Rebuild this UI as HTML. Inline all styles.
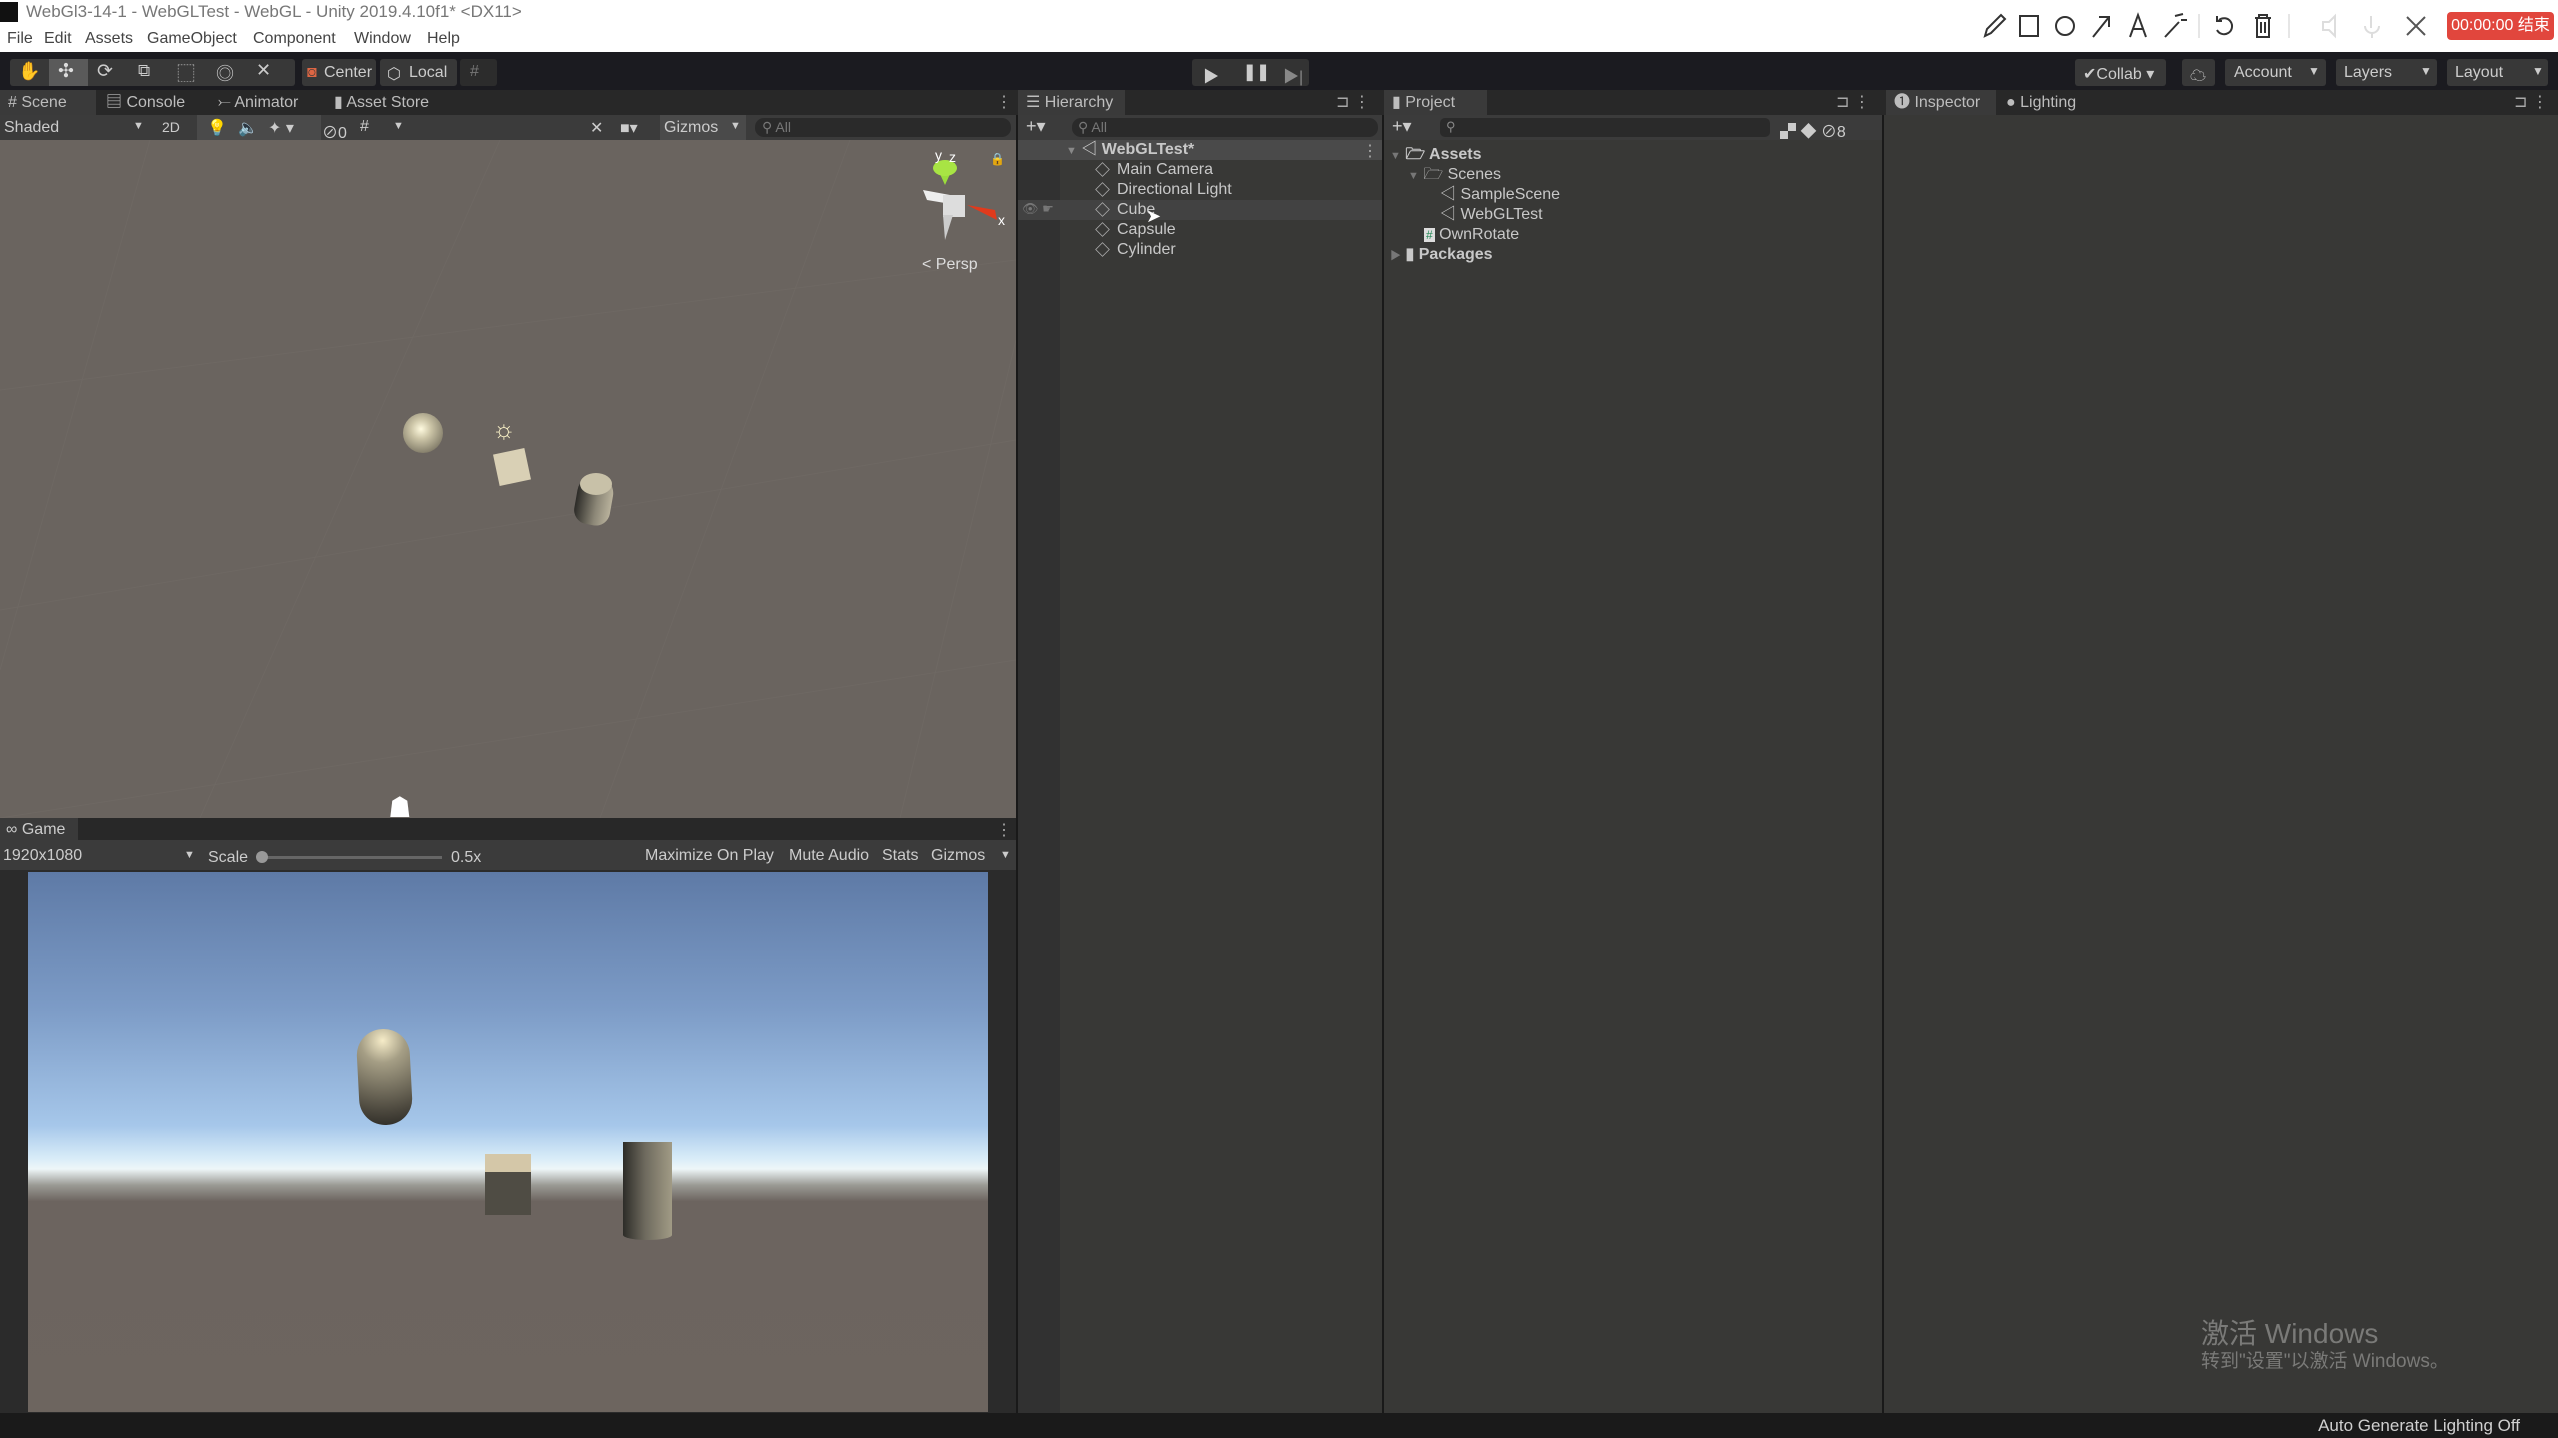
<!DOCTYPE html>
<html><head><meta charset="utf-8"><style>
*{margin:0;padding:0;box-sizing:border-box}
body{width:2558px;height:1438px;overflow:hidden;background:#191919;font-family:"Liberation Sans","Noto Sans CJK SC",sans-serif;font-size:16px;color:#c4c4c4;position:relative}
.a{position:absolute}
.t{position:absolute;white-space:nowrap}
.btn{position:absolute;background:#383838;border-radius:3px}
.tab{position:absolute;top:90px;height:25px;background:#282828;line-height:25px;padding-left:8px;color:#bdbdbd}
.row{position:absolute;height:20px;line-height:20px;white-space:nowrap;color:#c8c8c8}
.cube{display:inline-block;width:13px;height:13px;border:1.5px solid #aaa;transform:rotate(45deg) scale(.8);margin-right:8px;vertical-align:-2px}
</style></head><body>
<div class="a" style="left:0;top:0;width:2558px;height:52px;background:#fff"></div>
<div class="a" style="left:0;top:2px;width:18px;height:20px;background:#111"></div>
<div class="t" style="left:26px;top:2px;font-size:17px;color:#777">WebGl3-14-1 - WebGLTest - WebGL - Unity 2019.4.10f1* &lt;DX11&gt;</div>
<div class="t" style="left:7px;top:30px;font-size:16px;color:#444">File</div>
<div class="t" style="left:44px;top:30px;color:#444">Edit</div>
<div class="t" style="left:85px;top:30px;color:#444">Assets</div>
<div class="t" style="left:147px;top:30px;color:#444">GameObject</div>
<div class="t" style="left:253px;top:30px;color:#444">Component</div>
<div class="t" style="left:354px;top:30px;color:#444">Window</div>
<div class="t" style="left:427px;top:30px;color:#444">Help</div>
<svg class="a" style="left:1975px;top:10px" width="460" height="32" fill="none" stroke="#333" stroke-width="2">
<path d="M10 26 L12 19 L26 5 L30 9 L16 23 Z"/>
<rect x="45" y="6" width="18" height="20"/>
<circle cx="90" cy="16" r="9"/>
<path d="M118 27 L134 7 M124 7 H134 V17"/>
<path d="M155 27 L163 5 L171 27 M158 19 H168"/>
<path d="M190 27 L204 12 M200 6 L208 4 M206 10 L212 10"/>
<path d="M224 4 V28" stroke="#ccc" stroke-width="1"/>
<path d="M244 10 A8 8 0 1 1 242 20 M242 6 V11 H247"/>
<path d="M280 8 H296 M284 8 V5 H292 V8 M282 8 V27 H294 V8 M286 12 V23 M290 12 V23"/>
<path d="M314 4 V28" stroke="#ccc" stroke-width="1"/>
<path d="M348 12 H354 L360 6 V26 L354 20 H348 Z" stroke="#ddd"/>
<path d="M396 6 V18 M390 16 A7 7 0 0 0 404 16 M397 23 V28" stroke="#ddd"/>
<path d="M432 7 L450 25 M450 7 L432 25" stroke="#555"/>
</svg>
<div class="a" style="left:2447px;top:12px;width:107px;height:28px;background:#e1463d;border-radius:4px;color:#fff;font-size:16px;line-height:28px;text-align:center">00:00:00 结束</div>

<div class="a" style="left:0;top:52px;width:2558px;height:38px;background:#1b1b20"></div>
<div class="btn" style="left:10px;top:59px;width:285px;height:27px;background:#383838"></div>
<div class="btn" style="left:49px;top:59px;width:39px;height:27px;background:#5a5a5a;border-radius:0"></div>
<div class="t" style="left:18px;top:61px;font-size:18px;color:#ddd">✋</div>
<div class="t" style="left:58px;top:60px;font-size:19px;color:#ddd">✣</div>
<div class="t" style="left:97px;top:60px;font-size:19px;color:#ccc">⟳</div>
<div class="t" style="left:138px;top:61px;font-size:17px;color:#ccc">⧉</div>
<div class="t" style="left:177px;top:60px;font-size:18px;color:#ccc">⬚</div>
<div class="t" style="left:216px;top:60px;font-size:18px;color:#ccc">◎</div>
<div class="t" style="left:256px;top:60px;font-size:18px;color:#ccc">✕</div>
<div class="btn" style="left:302px;top:59px;width:74px;height:27px"></div>
<div class="t" style="left:307px;top:64px;color:#d64">◙</div><div class="t" style="left:324px;top:64px;color:#ccc">Center</div>
<div class="btn" style="left:380px;top:59px;width:77px;height:27px"></div>
<div class="t" style="left:387px;top:64px;color:#ccc">⬡</div><div class="t" style="left:409px;top:64px;color:#ccc">Local</div>
<div class="btn" style="left:460px;top:59px;width:37px;height:27px;background:#2c2c2c"></div>
<div class="t" style="left:470px;top:63px;color:#777">#</div>
<div class="btn" style="left:1192px;top:59px;width:117px;height:27px;background:#333"></div>
<div class="t" style="left:1203px;top:63px;color:#ccc">▶</div>
<div class="t" style="left:1243px;top:62px;color:#ccc;font-weight:bold">❚❚</div>
<div class="t" style="left:1283px;top:63px;color:#888">▶|</div>
<div class="btn" style="left:2075px;top:59px;width:91px;height:27px"></div><div class="t" style="left:2083px;top:64px;color:#ccc">✔Collab ▾</div>
<div class="btn" style="left:2182px;top:59px;width:33px;height:27px"></div><div class="t" style="left:2190px;top:62px;color:#ccc">☁</div>
<div class="btn" style="left:2225px;top:59px;width:101px;height:27px"></div><div class="t" style="left:2234px;top:64px;color:#ccc">Account</div><div class="t" style="left:2308px;top:64px;font-size:12px;color:#ccc">▼</div>
<div class="btn" style="left:2336px;top:59px;width:101px;height:27px"></div><div class="t" style="left:2344px;top:64px;color:#ccc">Layers</div><div class="t" style="left:2420px;top:64px;font-size:12px;color:#ccc">▼</div>
<div class="btn" style="left:2447px;top:59px;width:101px;height:27px"></div><div class="t" style="left:2455px;top:64px;color:#ccc">Layout</div><div class="t" style="left:2532px;top:64px;font-size:12px;color:#ccc">▼</div>

<div class="a" style="left:0;top:90px;width:2558px;height:25px;background:#282828"></div>
<div class="tab" style="left:0;width:96px;background:#3a3a3a">#&nbsp;Scene</div>
<div class="tab" style="left:98px;width:110px">▤ Console</div>
<div class="tab" style="left:210px;width:118px">⤚ Animator</div>
<div class="tab" style="left:326px;width:130px">▮ Asset Store</div>
<div class="t" style="left:996px;top:92px;color:#aaa">⋮</div>
<div class="tab" style="left:1018px;width:107px;background:#3a3a3a">☰ Hierarchy</div>
<div class="t" style="left:1336px;top:92px;color:#aaa">⊐ ⋮</div>
<div class="tab" style="left:1384px;width:103px;background:#3a3a3a">▮ Project</div>
<div class="t" style="left:1836px;top:92px;color:#aaa">⊐ ⋮</div>
<div class="tab" style="left:1886px;width:110px;background:#3a3a3a">❶ Inspector</div>
<div class="tab" style="left:1998px;width:100px">● Lighting</div>
<div class="t" style="left:2514px;top:92px;color:#aaa">⊐ ⋮</div>

<div class="a" style="left:0;top:115px;width:1016px;height:25px;background:#3b3b3b"></div>
<div class="t" style="left:4px;top:119px;color:#ccc">Shaded</div><div class="t" style="left:133px;top:120px;font-size:11px;color:#ccc">▼</div>
<div class="t" style="left:162px;top:119px;font-size:14px;color:#ccc">2D</div>
<div class="a" style="left:197px;top:115px;width:124px;height:25px;background:#4a4a4a"></div>
<div class="t" style="left:207px;top:118px;color:#ddd">💡</div><div class="t" style="left:238px;top:118px;color:#ccc">🔈</div><div class="t" style="left:268px;top:118px;color:#ccc">✦ ▾</div>
<div class="t" style="left:322px;top:119px;color:#ccc">⊘0</div><div class="t" style="left:360px;top:118px;color:#ccc">#</div><div class="t" style="left:393px;top:120px;font-size:11px;color:#ccc">▼</div>
<div class="t" style="left:590px;top:118px;color:#ccc">✕</div><div class="t" style="left:620px;top:118px;color:#ccc">■▾</div>
<div class="a" style="left:660px;top:115px;width:86px;height:25px;background:#4a4a4a"></div>
<div class="t" style="left:664px;top:119px;color:#ccc">Gizmos</div><div class="t" style="left:730px;top:120px;font-size:11px;color:#ccc">▼</div>
<div class="a" style="left:755px;top:118px;width:256px;height:19px;background:#2a2a2a;border-radius:9px"></div>
<div class="t" style="left:762px;top:119px;font-size:14px;color:#777">⚲ All</div>

<div class="a" style="left:0;top:140px;width:1016px;height:678px;background:#6a645f;overflow:hidden">
<svg width="1016" height="678" style="position:absolute;left:0;top:0" stroke="#6e6863" stroke-width="1" fill="none">
<path d="M0 250 L1016 120 M0 470 L1016 300 M0 678 L1016 520 M150 0 L0 530 M500 0 L200 678 M850 0 L600 678 M1016 200 L900 678"/>
</svg>
<div class="a" style="left:403px;top:273px;width:40px;height:40px;border-radius:50%;background:radial-gradient(circle at 45% 40%,#fffbe0 0,#cdc6a8 30%,#5a5548 100%)"></div>
<div class="t" style="left:492px;top:274px;font-size:26px;color:#fbf3c8">☼</div>
<div class="a" style="left:496px;top:311px;width:32px;height:32px;background:#d9d0b5;transform:rotate(-12deg)"></div>
<div class="a" style="left:576px;top:335px;width:36px;height:50px;border-radius:18px 18px 14px 14px;background:linear-gradient(90deg,#2b2a27,#8d8878 60%,#b9b29c);transform:rotate(10deg)"></div>
<div class="a" style="left:580px;top:333px;width:32px;height:22px;border-radius:50%;background:#c8c1a8"></div>
<div class="t" style="left:388px;top:648px;font-size:24px;color:#fff">☗</div>
<svg class="a" style="left:905px;top:10px" width="110" height="110">
<polygon points="30,13 50,13 40,35" fill="#9bdc3c"/>
<ellipse cx="40" cy="18" rx="12" ry="8" fill="#a8e444"/>
<polygon points="22,50 52,55 45,45 18,40" fill="#eee"/>
<rect x="38" y="45" width="22" height="22" fill="#ddd"/>
<polygon points="90,60 62,55 92,70" fill="#e03a1c"/>
<polygon points="40,90 48,65 38,65" fill="#ccc"/>
<text x="30" y="10" fill="#fff" font-size="14" font-family="Liberation Sans">y</text>
<text x="44" y="12" fill="#fff" font-size="14" font-family="Liberation Sans">z</text>
<text x="93" y="75" fill="#fff" font-size="14" font-family="Liberation Sans">x</text>
</svg>
<div class="t" style="left:922px;top:116px;font-size:16px;color:#ddd">&lt; Persp</div>
<div class="t" style="left:990px;top:12px;font-size:12px;color:#ccc">🔒</div>
</div>

<div class="a" style="left:0;top:818px;width:1016px;height:22px;background:#282828"></div>
<div class="a" style="left:0;top:818px;width:78px;height:22px;background:#3a3a3a"></div>
<div class="t" style="left:6px;top:821px;color:#ccc">∞ Game</div>
<div class="t" style="left:996px;top:820px;color:#aaa">⋮</div>
<div class="a" style="left:0;top:840px;width:1016px;height:30px;background:#3b3b3b"></div>
<div class="t" style="left:3px;top:847px;color:#ccc">1920x1080</div><div class="t" style="left:184px;top:849px;font-size:11px;color:#ccc">▼</div>
<div class="t" style="left:208px;top:849px;color:#ccc">Scale</div>
<div class="a" style="left:262px;top:856px;width:180px;height:3px;background:#666"></div>
<div class="a" style="left:256px;top:851px;width:12px;height:12px;border-radius:50%;background:#999"></div>
<div class="t" style="left:451px;top:849px;color:#ccc">0.5x</div>
<div class="t" style="left:645px;top:847px;color:#ccc">Maximize On Play</div>
<div class="t" style="left:789px;top:847px;color:#ccc">Mute Audio</div>
<div class="t" style="left:882px;top:847px;color:#ccc">Stats</div>
<div class="t" style="left:931px;top:847px;color:#ccc">Gizmos</div><div class="t" style="left:1000px;top:849px;font-size:11px;color:#ccc">▼</div>
<div class="a" style="left:0;top:870px;width:1016px;height:543px;background:#2b2b2b"></div>
<div class="a" style="left:28px;top:872px;width:960px;height:540px;background:linear-gradient(180deg,#5e7aa6 0%,#7c9bc6 25%,#a6c7ea 47%,#d8ecf8 53%,#eef6f8 55%,#9a9a94 58%,#6c645f 61%,#6d655f 100%)"></div>
<div class="a" style="left:358px;top:1029px;width:53px;height:96px;border-radius:26px;background:radial-gradient(circle at 50% 12%,#f6ecc8 0,#a59e85 25%,#4b473d 80%,#2c2a25);transform:rotate(-3deg)"></div>
<div class="a" style="left:485px;top:1154px;width:46px;height:18px;background:#d4c7a8"></div>
<div class="a" style="left:485px;top:1172px;width:46px;height:43px;background:#4f4c44"></div>
<div class="a" style="left:623px;top:1142px;width:49px;height:98px;border-radius:0 0 24px 24px/0 0 5px 5px;background:linear-gradient(90deg,#2d2c28,#6e6a5e 45%,#a19b85)"></div>

<div class="a" style="left:1016px;top:115px;width:2px;height:1298px;background:#191919"></div>
<div class="a" style="left:1018px;top:115px;width:364px;height:1298px;background:#383836"></div>
<div class="a" style="left:1018px;top:140px;width:42px;height:1273px;background:#313131"></div>
<div class="a" style="left:1018px;top:115px;width:364px;height:25px;background:#3b3b3b"></div>
<div class="t" style="left:1026px;top:116px;font-size:18px;color:#ccc">+▾</div>
<div class="a" style="left:1072px;top:118px;width:306px;height:19px;background:#2a2a2a;border-radius:9px"></div>
<div class="t" style="left:1078px;top:119px;font-size:14px;color:#777">⚲ All</div>
<div class="a" style="left:1018px;top:140px;width:364px;height:20px;background:#4a4a4a"></div>
<div class="row" style="left:1066px;top:140px;font-weight:bold"><span style="color:#888;font-size:11px">▼</span> <span style="color:#ccc">◁</span> WebGLTest*</div>
<div class="t" style="left:1362px;top:141px;color:#aaa">⋮</div>
<div class="a" style="left:1018px;top:200px;width:364px;height:20px;background:#424242"></div>
<div class="t" style="left:1022px;top:201px;font-size:13px;color:#777">👁 ☛</div>
<div class="row" style="left:1096px;top:160px"><span class="cube"></span>Main Camera</div>
<div class="row" style="left:1096px;top:180px"><span class="cube"></span>Directional Light</div>
<div class="row" style="left:1096px;top:200px"><span class="cube"></span>Cube</div>
<div class="row" style="left:1096px;top:220px"><span class="cube"></span>Capsule</div>
<div class="row" style="left:1096px;top:240px"><span class="cube"></span>Cylinder</div>
<div class="t" style="left:1146px;top:206px;font-size:18px;color:#fff">➤</div>

<div class="a" style="left:1382px;top:115px;width:2px;height:1298px;background:#191919"></div>
<div class="a" style="left:1384px;top:115px;width:498px;height:1298px;background:#383836"></div>
<div class="a" style="left:1384px;top:115px;width:498px;height:25px;background:#3b3b3b"></div>
<div class="t" style="left:1392px;top:116px;font-size:18px;color:#ccc">+▾</div>
<div class="a" style="left:1440px;top:118px;width:330px;height:19px;background:#2a2a2a;border-radius:5px"></div>
<div class="t" style="left:1446px;top:119px;font-size:13px;color:#888">⚲</div>
<div class="t" style="left:1780px;top:118px;color:#ccc">▞ ◆ ⊘8</div>
<div class="row" style="left:1390px;top:145px;font-weight:bold"><span style="color:#777;font-size:11px">▼</span> 🗁 Assets</div>
<div class="row" style="left:1408px;top:165px"><span style="color:#777;font-size:11px">▼</span> 🗁 Scenes</div>
<div class="row" style="left:1440px;top:185px">◁ SampleScene</div>
<div class="row" style="left:1440px;top:205px">◁ WebGLTest</div>
<div class="row" style="left:1424px;top:225px"><span style="background:#ddd;color:#285;font-size:12px;padding:0 2px">#</span> OwnRotate</div>
<div class="row" style="left:1390px;top:245px;font-weight:bold"><span style="color:#777;font-size:11px">▶</span> ▮ Packages</div>

<div class="a" style="left:1882px;top:115px;width:2px;height:1298px;background:#191919"></div>
<div class="a" style="left:1884px;top:115px;width:674px;height:1298px;background:#383836"></div>
<div class="t" style="left:2201px;top:1312px;font-size:28px;color:#7a7a78">激活 Windows</div>
<div class="t" style="left:2201px;top:1346px;font-size:19px;color:#7a7a78">转到"设置"以激活 Windows。</div>

<div class="a" style="left:0;top:1413px;width:2558px;height:25px;background:#1a1a1a"></div>
<div class="t" style="right:38px;top:1416px;font-size:17px;color:#d0d0d0">Auto Generate Lighting Off</div>
</body></html>
